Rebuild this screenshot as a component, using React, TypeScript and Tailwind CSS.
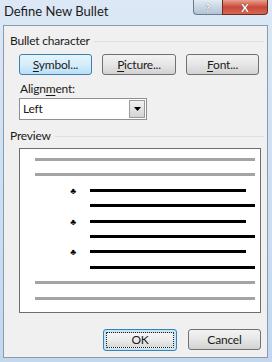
import React from "react";

const font = { fontFamily: 'Lato, "Open Sans", "Liberation Sans", sans-serif' };

function Key({ children }: { children: React.ReactNode }) {
  return <span className="underline underline-offset-[2px] decoration-[1px]">{children}</span>;
}

function Btn({
  children,
  width,
  tone = "gray",
}: {
  children: React.ReactNode;
  width: string;
  tone?: "gray" | "blue" | "focus";
}) {
  if (tone === "blue") {
    return (
      <div
        className={`${width} h-[21px] rounded-[3px] border border-[#3c7fb1] bg-gradient-to-b from-[#e5f4fc] via-[#d6edfb] to-[#b9dff7] flex items-center justify-center`}
      >
        {children}
      </div>
    );
  }
  if (tone === "focus") {
    return (
      <div
        className={`${width} h-[22px] rounded-[3px] border border-[#3c7fb1] bg-[#c6e6f7] p-[2px] flex`}
      >
        <div className="flex-1 rounded-[1px] border border-dotted border-[#202020] bg-gradient-to-b from-[#f4f4f4] via-[#ececec] to-[#d9d9d9] flex items-center justify-center">
          {children}
        </div>
      </div>
    );
  }
  return (
    <div
      className={`${width} h-[21px] rounded-[3px] border border-[#707070] bg-gradient-to-b from-[#f3f3f3] via-[#e6e6e6] to-[#d2d2d2] flex items-center justify-center`}
    >
      {children}
    </div>
  );
}

function Line({ tone, short }: { tone: "gray" | "black"; short?: boolean }) {
  if (tone === "gray") {
    return (
      <div className="h-[16px] flex items-start">
        <div className="ml-[15px] w-[220px] h-[3px] bg-[#a3a3a3]" />
      </div>
    );
  }
  return (
    <div className="h-[16px] flex items-start">
      <div className="w-[70px] h-[3px] flex items-center justify-end pr-[14px]">
        {short && <span className="text-[9px] leading-none text-black">♣</span>}
      </div>
      <div className={`h-[3px] bg-black ${short ? "w-[156px]" : "w-[165px]"}`} />
    </div>
  );
}

export default function App() {
  return (
    <div
      className="w-[272px] h-[362px] bg-gradient-to-b from-[#dce8f5] via-[#cddff2] to-[#c3d8ef] flex flex-col overflow-hidden"
      style={font}
    >
      {/* title bar */}
      <div className="h-[25px] flex items-start relative">
        <span className="pl-[4px] pt-[3px] text-[13px] leading-[16px] text-[#1b1b1b]">Define New Bullet</span>
        <div className="absolute top-0 right-[4px] flex">
          <div className="w-[29px] h-[15px] rounded-bl-[4px] border border-t-0 border-r-0 border-[#6b7b8c] bg-gradient-to-b from-[#e3ebf3] via-[#c9d6e4] to-[#b2c3d6] flex items-center justify-center text-[11px] font-bold leading-none text-white [text-shadow:0_0_1px_#3d4a58]">
            ?
          </div>
          <div className="w-[46px] h-[15px] rounded-br-[4px] border border-t-0 border-[#6b2a22] bg-gradient-to-b from-[#e8a08e] via-[#c9473a] to-[#d46a52] flex items-center justify-center text-[11px] font-bold leading-none text-white [text-shadow:0_0_1px_#4b1510]">
            X
          </div>
        </div>
      </div>

      {/* client */}
      <div className="ml-[3px] w-[265px] h-[333px] border border-[#8a9bb0] bg-[#f0f0f0] flex flex-col text-[12px] tracking-[-0.2px] text-[#1a1a1a]">
        <div className="mt-[7px] h-[16px] flex items-center pl-[6px] pr-[3px] gap-[4px]">
          <span className="leading-[16px]">Bullet character</span>
          <div className="flex-1 h-px bg-[#dcdfe3]" />
        </div>

        <div className="mt-[5px] pl-[15px] flex gap-[10px]">
          <Btn width="w-[73px]" tone="blue">
            <span>
              <Key>S</Key>ymbol...
            </span>
          </Btn>
          <Btn width="w-[74px]">
            <span>
              <Key>P</Key>icture...
            </span>
          </Btn>
          <Btn width="w-[73px]">
            <span>
              <Key>F</Key>ont...
            </span>
          </Btn>
        </div>

        <div className="mt-[6px] pl-[16px] h-[16px] leading-[16px]">
          Align<Key>m</Key>ent:
        </div>

        <div className="mt-[1px] ml-[15px] w-[128px] h-[22px] border border-[#8e8f8f] bg-white flex items-center">
          <span className="pl-[3px] flex-1">Left</span>
          <div className="mr-[1px] w-[16px] h-[18px] border border-[#9a9a9a] bg-gradient-to-b from-[#f2f2f2] to-[#d4d4d4] flex items-center justify-center">
            <svg width="7" height="4" viewBox="0 0 7 4">
              <path d="M0 0h7L3.5 4z" fill="#000" />
            </svg>
          </div>
        </div>

        <div className="mt-[8px] h-[16px] flex items-center pl-[6px] pr-[3px] gap-[4px]">
          <span className="leading-[16px]">Preview</span>
          <div className="flex-1 h-px bg-[#dcdfe3]" />
        </div>

        <div className="mt-[4px] ml-[15px] w-[242px] h-[165px] border border-[#6e6e6e] bg-white flex flex-col pt-[9px]">
          <Line tone="gray" />
          <Line tone="gray" />
          <Line tone="black" short />
          <Line tone="black" />
          <Line tone="black" short />
          <Line tone="black" />
          <Line tone="black" short />
          <Line tone="black" />
          <Line tone="gray" />
          <Line tone="gray" />
        </div>

        <div className="mt-[16px] pl-[99px] flex gap-[11px]">
          <Btn width="w-[74px]" tone="focus">
            OK
          </Btn>
          <Btn width="w-[73px]">Cancel</Btn>
        </div>
      </div>
    </div>
  );
}
